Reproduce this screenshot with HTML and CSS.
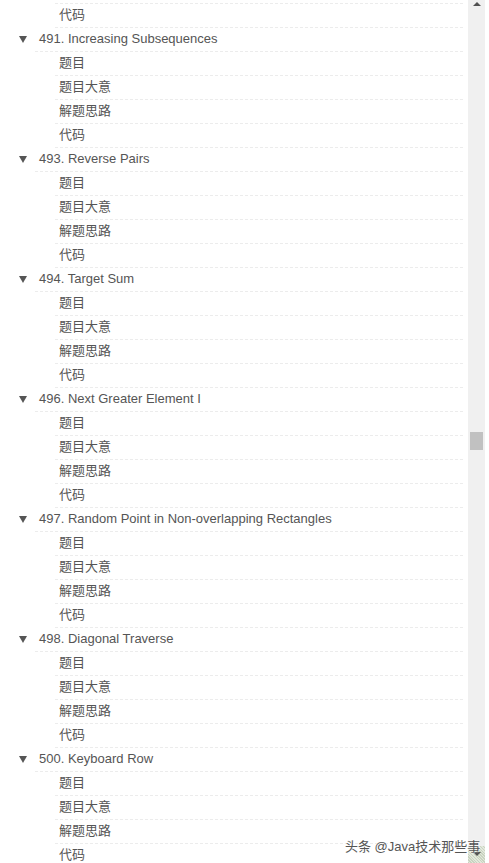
FILE: index.html
```html
<!DOCTYPE html>
<html lang="zh-CN">
<head>
  <meta charset="UTF-8" />
  <meta name="viewport" content="width=device-width, initial-scale=1.0" />
  <title>目录</title>
  <link rel="stylesheet" href="styles.css">
</head>
<body>
  <div class="page">
    <div class="toc">
      <ul class="toc-list">
        <li class="sub spacer"></li>
        <li class="sub">代码</li>
      </ul>
      <div id="sections"></div>
    </div>
    <div class="scrollbar">
      <div class="arrow up"></div>
      <div class="track"><div class="thumb"></div></div>
      <div class="arrow down"></div>
    </div>
  </div>
  <div class="watermark">头条 @Java技术那些事</div>

  <script>
    const titles = [
      '491. Increasing Subsequences',
      '493. Reverse Pairs',
      '494. Target Sum',
      '496. Next Greater Element I',
      '497. Random Point in Non-overlapping Rectangles',
      '498. Diagonal Traverse',
      '500. Keyboard Row'
    ];
    const subs = ['题目', '题目大意', '解题思路', '代码'];
    let html = '';
    titles.forEach(function (t) {
      html += '<ul class="toc-list"><li class="head"><span class="caret"></span>' + t + '</li>';
      subs.forEach(function (s) { html += '<li class="sub">' + s + '</li>'; });
      html += '</ul>';
    });
    document.getElementById('sections').innerHTML = html;
  </script>
</body>
</html>
```

FILE: styles.css
```css
html, body {
  margin: 0;
  padding: 0;
  height: 100%;
  overflow: hidden;
  background: #ffffff;
}
body {
  font-family: 'Liberation Sans', Arial, 'Noto Sans CJK SC', sans-serif;
  font-size: 13px;
  color: #555555;
}
.page {
  display: flex;
  height: 863px;
}
.toc {
  width: 463px;
  padding-right: 5px;
}
.toc-list {
  list-style: none;
  margin: 0;
  padding: 0;
}
.toc-list li {
  height: 23px;
  line-height: 21px;
  border-bottom: 1px dashed #ececec;
  white-space: nowrap;
}
.toc-list li.spacer {
  height: 3px;
}
.head {
  margin-left: 35px;
  padding-left: 4px;
  position: relative;
}
.caret {
  position: absolute;
  left: -16px;
  top: 8px;
  width: 0;
  height: 0;
  border-left: 4px solid transparent;
  border-right: 4px solid transparent;
  border-top: 7px solid #555;
}
.sub {
  margin-left: 55px;
  padding-left: 4px;
}
.scrollbar {
  width: 17px;
  background: #f0f0f0;
  display: flex;
  flex-direction: column;
}
.arrow {
  height: 17px;
  position: relative;
}
.arrow.up::after,
.arrow.down::after {
  content: '';
  position: absolute;
  left: 5px;
  width: 0;
  height: 0;
  border-left: 4px solid transparent;
  border-right: 4px solid transparent;
}
.arrow.up::after {
  top: 2px;
  border-bottom: 4px solid #505050;
}
.arrow.down {
  background: repeating-linear-gradient(45deg, #c9d3c0 0 1px, #e2e8dc 1px 2px);
}
.arrow.down::after {
  top: 6px;
  border-top: 4px solid #505050;
}
.track {
  flex: 1;
  position: relative;
}
.thumb {
  position: absolute;
  left: 2px;
  right: 2px;
  top: 415px;
  height: 18px;
  background: #c1c1c1;
}
.watermark {
  position: absolute;
  left: 345px;
  top: 836px;
  font-size: 13px;
  white-space: nowrap;
  color: #555;
  text-shadow: 0 0 2px #fff, 0 0 2px #fff;
}
```
